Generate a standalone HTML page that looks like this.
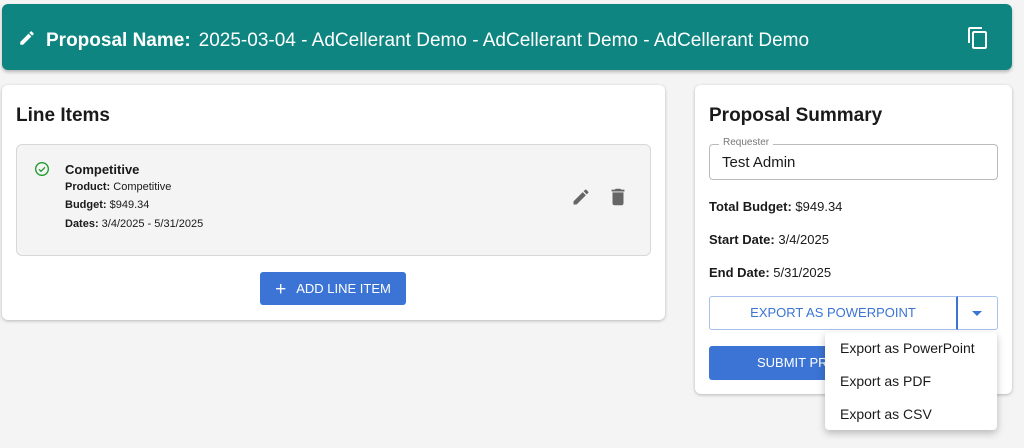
<!DOCTYPE html><html><head><style>
*{box-sizing:border-box;margin:0;padding:0}
body{width:1024px;height:448px;background:#f4f4f4;font-family:"Liberation Sans",sans-serif;position:relative;overflow:hidden;color:#1a1a1a}
.hdr{position:absolute;left:2px;top:4px;width:1010px;height:66px;background:#0e8580;border-radius:6px;box-shadow:0 2px 3px rgba(0,0,0,.25);color:#fff}
.hdr .t{position:absolute;left:44px;top:25px;font-size:19px;line-height:24px}
.card{position:absolute;background:#fff;border-radius:6px;box-shadow:0 1px 3px rgba(0,0,0,.25)}
h2{position:absolute;font-size:19px;font-weight:bold}
.li{position:absolute;left:14px;top:59px;width:635px;height:112px;background:#f4f4f4;border:1px solid #d8d8d8;border-radius:6px}
.s{font-size:11px;position:absolute;left:48px}
.btn{position:absolute;background:#3b74d4;color:#fff;border-radius:3px;font-size:13px;text-align:center}
.f{position:absolute;font-size:13px;left:14px}
</style></head><body>
<div class="hdr">
<svg style="position:absolute;left:16px;top:25px" width="18" height="18" viewBox="0 0 24 24"><path fill="#fff" d="M3 17.25V21h3.75L17.81 9.94l-3.75-3.75L3 17.25zM20.71 7.04a1 1 0 000-1.41l-2.34-2.34a1 1 0 00-1.41 0l-1.83 1.83 3.75 3.75 1.83-1.83z"/></svg>
<div class="t"><b>Proposal Name:</b><span style="margin-left:8px">2025-03-04 - AdCellerant Demo - AdCellerant Demo - AdCellerant Demo</span></div>
<svg style="position:absolute;left:964px;top:22px" width="24" height="24" viewBox="0 0 24 24"><path fill="#fff" d="M16 1H4c-1.1 0-2 .9-2 2v14h2V3h12V1zm3 4H8c-1.1 0-2 .9-2 2v14c0 1.1.9 2 2 2h11c1.1 0 2-.9 2-2V7c0-1.1-.9-2-2-2zm0 16H8V7h11v14z"/></svg>
</div>
<div class="card" style="left:2px;top:85px;width:663px;height:235px">
<h2 style="left:14px;top:20px">Line Items</h2>
<div class="li">
<svg style="position:absolute;left:17px;top:16px" width="16" height="16" viewBox="0 0 24 24"><circle cx="12" cy="12" r="9.5" fill="none" stroke="#1f9a2e" stroke-width="2"/><path d="M7.5 12.5l3 3 6-6" fill="none" stroke="#1f9a2e" stroke-width="2"/></svg>
<div class="s" style="top:17px;font-size:13px;font-weight:bold">Competitive</div>
<div class="s" style="top:36px"><b>Product:</b> Competitive</div>
<div class="s" style="top:54px"><b>Budget:</b> $949.34</div>
<div class="s" style="top:73px"><b>Dates:</b> 3/4/2025 - 5/31/2025</div>
<svg style="position:absolute;left:554px;top:42px" width="20" height="20" viewBox="0 0 24 24"><path fill="#666" d="M3 17.25V21h3.75L17.81 9.940l-3.75-3.75L3 17.25zM20.71 7.04a1 1 0 000-1.41l-2.34-2.34a1 1 0 00-1.41 0l-1.83 1.83 3.75 3.75 1.83-1.83z"/></svg>
<svg style="position:absolute;left:590px;top:41px" width="22" height="22" viewBox="0 0 24 24"><path fill="#666" d="M6 19c0 1.1.9 2 2 2h8c1.1 0 2-.9 2-2V7H6v12zM19 4h-3.5l-1-1h-5l-1 1H5v2h14V4z"/></svg>
</div>
<div class="btn" style="left:258px;top:187px;width:146px;height:33px;line-height:33px"><span style="font-size:19px;vertical-align:-2px;margin-right:10px">+</span>ADD LINE ITEM</div>
</div>
<div class="card" style="left:695px;top:85px;width:317px;height:309px">
<h2 style="left:14px;top:20px">Proposal Summary</h2>
<div style="position:absolute;left:14px;top:59px;width:289px;height:36px;border:1.5px solid #bbb;border-radius:4px"></div>
<div style="position:absolute;left:24px;top:52px;background:#fff;padding:0 4px;font-size:10px;color:#777">Requester</div>
<div style="position:absolute;left:27px;top:69px;font-size:15px">Test Admin</div>
<div class="f" style="top:114px"><b>Total Budget:</b> $949.34</div>
<div class="f" style="top:147px"><b>Start Date:</b> 3/4/2025</div>
<div class="f" style="top:180px"><b>End Date:</b> 5/31/2025</div>
<div style="position:absolute;left:14px;top:211px;width:249px;height:34px;border:1.5px solid #a8c2ec;border-right:2px solid #3b74d4;border-radius:3px 0 0 3px;color:#3b74d4;font-size:13px;text-align:center;line-height:31px">EXPORT AS POWERPOINT</div>
<div style="position:absolute;left:263px;top:211px;width:40px;height:34px;border:1.5px solid #a8c2ec;border-left:none;border-radius:0 3px 3px 0"><div style="position:absolute;left:14px;top:14px;border:5px solid transparent;border-top-color:#3b74d4"></div></div>
<div class="btn" style="left:14px;top:261px;width:286px;height:34px;line-height:34px;text-align:left;padding-left:48px;overflow:hidden;white-space:nowrap">SUBMIT PROPOSAL</div>
</div>
<div style="position:absolute;left:825px;top:332px;width:172px;height:98px;background:#fff;border-radius:4px;box-shadow:0 3px 8px rgba(0,0,0,.25);font-size:14px">
<div style="position:absolute;left:15px;top:8px">Export as PowerPoint</div>
<div style="position:absolute;left:15px;top:41px">Export as PDF</div>
<div style="position:absolute;left:15px;top:74px">Export as CSV</div>
</div>
</body></html>
